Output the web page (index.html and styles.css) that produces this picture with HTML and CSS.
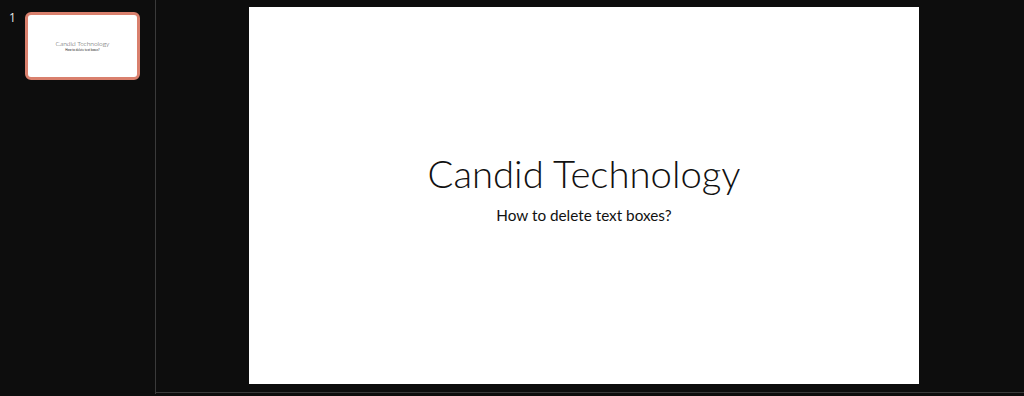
FILE: index.html
```html
<!DOCTYPE html>
<html>
<head>
<meta charset="utf-8">
<link rel="stylesheet" href="styles.css">
</head>
<body>
<div class="app">
  <aside class="pane">
    <div class="thumb-row">
      <span class="num">1</span>
      <div class="thumb">
        <div class="thumb-inner">
          <div class="t-title">Candid Technology</div>
          <div class="t-sub">How to delete text boxes?</div>
        </div>
      </div>
    </div>
  </aside>
  <main class="stage">
    <div class="slide">
      <div class="title">Candid Technology</div>
      <div class="subtitle">How to delete text boxes?</div>
    </div>
  </main>
</div>
</body>
</html>
```
FILE: styles.css
```css
html, body {
  margin: 0;
  padding: 0;
  background: #0d0d0d;
  width: 1024px;
  height: 396px;
  overflow: hidden;
}
.app {
  display: flex;
  height: 394px;
}
.pane {
  width: 155px;
  border-right: 1px solid #3a3a3a;
  box-sizing: content-box;
}
.thumb-row {
  display: flex;
  align-items: flex-start;
  padding: 12px 0 0 9px;
}
.num {
  width: 16px;
  color: #e8e8e8;
  font-family: "Open Sans", sans-serif;
  font-size: 12px;
  line-height: 12px;
}
.thumb {
  width: 109px;
  height: 62px;
  border: 3px solid #d9806d;
  border-radius: 6px;
  background: #ffffff;
  box-sizing: content-box;
}
.thumb-inner {
  height: 100%;
  display: flex;
  flex-direction: column;
  align-items: center;
  padding-top: 24px;
  box-sizing: border-box;
  font-family: "Lato", sans-serif;
  color: #444444;
}
.t-title {
  font-size: 6.6px;
  font-weight: 300;
  line-height: 8px;
}
.t-sub {
  font-size: 3px;
  line-height: 5px;
  margin-top: 1px;
  color: #222222;
}
.stage {
  flex: 1;
  height: 393px;
  border-bottom: 1px solid #3a3a3a;
  padding: 7px 0 0 93px;
  box-sizing: border-box;
}
.slide {
  width: 670px;
  height: 377px;
  background: #ffffff;
  display: flex;
  flex-direction: column;
  align-items: center;
  padding-top: 143px;
  box-sizing: border-box;
  color: #111;
}
.title {
  font-family: "Lato", sans-serif;
  font-weight: 300;
  font-size: 38.3px;
  line-height: 46px;
}
.subtitle {
  font-family: "Lato", sans-serif;
  font-size: 15.3px;
  line-height: 20px;
  margin-top: 9px;
}
```
